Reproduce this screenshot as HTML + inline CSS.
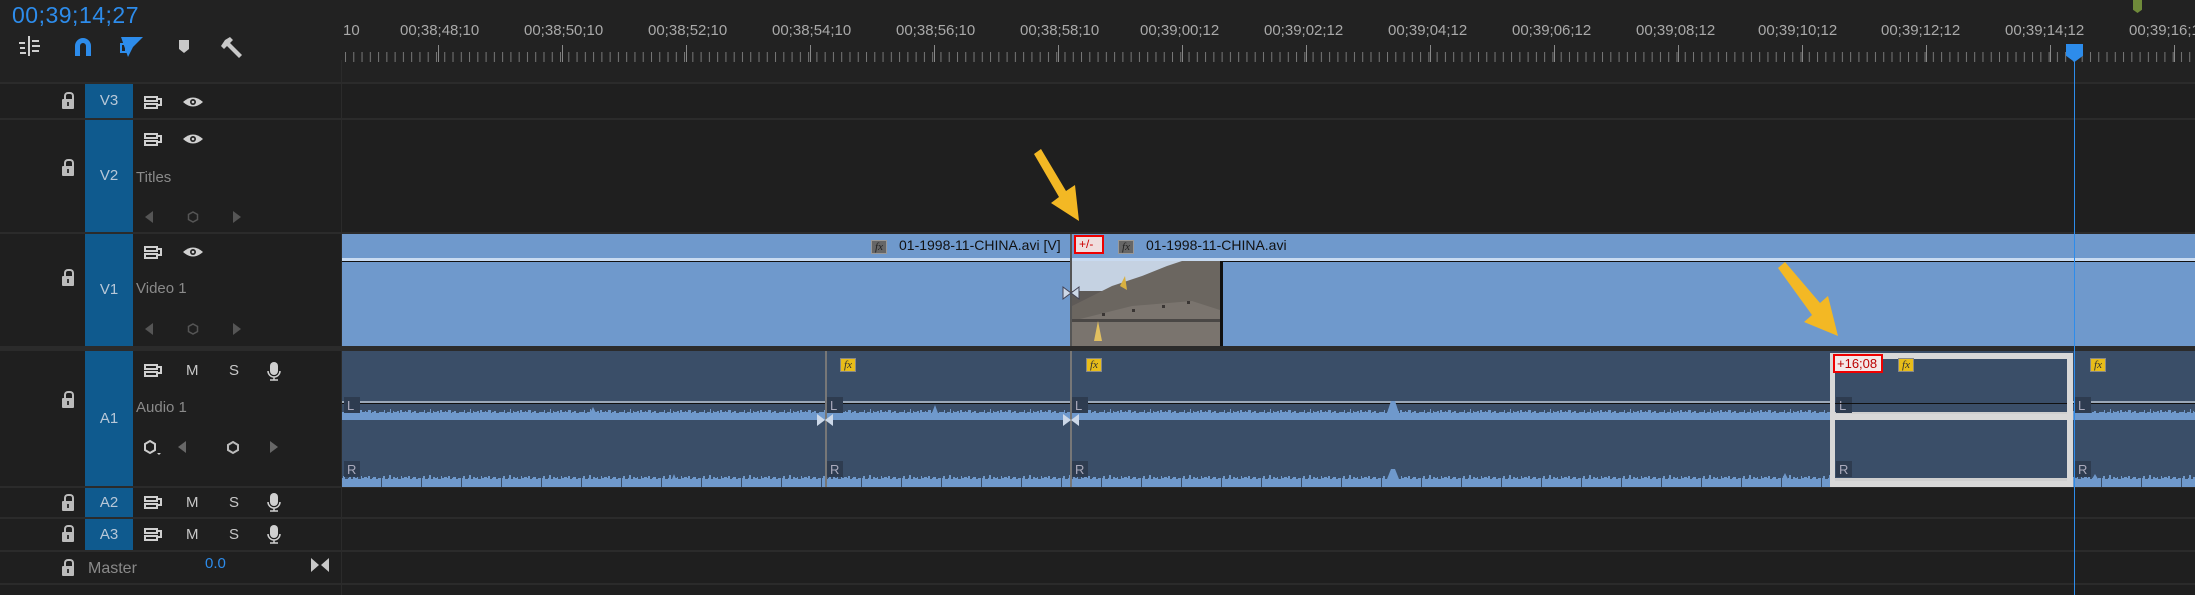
<!DOCTYPE html>
<html><head><meta charset="utf-8"><style>
*{margin:0;padding:0;box-sizing:border-box}
body{width:2195px;height:595px;background:#1f1f1f;position:relative;overflow:hidden;font-family:"Liberation Sans",sans-serif;color:#9a9a9a}
.a{position:absolute}
.row{position:absolute;left:0;width:2195px;border-bottom:2px solid #2b2b2b}
.lab{position:absolute;left:85px;width:48px;background:#0f5a8e;color:#b8c8d8;font-size:15px;text-align:center}
.lock{position:absolute;left:62px;width:12px;height:10px;background:#bbb;border-radius:1px}
.lock:before{content:"";position:absolute;left:2px;top:-7px;width:6px;height:7px;border:2px solid #bbb;border-bottom:none;border-radius:4px 4px 0 0}
.lock:after{content:"";position:absolute;left:5px;top:3px;width:2px;height:4px;background:#333}
.txt{position:absolute;font-size:15px;color:#8a8a8a}
.ic{position:absolute;font-size:15px;color:#c8c8c8}
.fx{position:absolute;width:16px;height:14px;background:#e8bd19;border:1px solid #888;font:italic 11px "Liberation Serif",serif;color:#333;text-align:center;line-height:12px}
.fxg{position:absolute;width:16px;height:14px;background:#666;border:1px solid #999;font:italic 11px "Liberation Serif",serif;color:#222;text-align:center;line-height:12px}
.rl{position:absolute;top:22px;font-size:15px;color:#a9a9a9;white-space:nowrap}
</style></head><body>
<!-- header -->
<div class="a" style="left:0;top:0;width:342px;height:82px;background:#222"></div>
<div class="a" style="left:12px;top:2px;font-size:23px;color:#2d8ceb;letter-spacing:0.5px">00;39;14;27</div>
<svg class="a" style="left:0;top:30px" width="342" height="36">
<g fill="#cfcfcf"><rect x="19" y="12" width="6" height="2"/><rect x="20" y="17" width="5" height="2"/><rect x="28" y="6" width="2" height="20"/><rect x="32" y="10" width="7" height="2"/><rect x="32" y="15" width="8" height="2"/><rect x="32" y="20" width="7" height="2"/><rect x="20" y="22" width="6" height="2"/></g>
<path d="M75 26 V16 a8 8 0 0 1 16 0 V26 h-5 V16 a3 3 0 0 0 -6 0 V26z" fill="#2d8ceb"/>
<path d="M121 7 h22 l-10 10 l-5 10 z" fill="#2d8ceb"/><rect x="121" y="14" width="5" height="8" fill="none" stroke="#2d8ceb" stroke-width="2"/>
<path d="M179 10 h10 v9 l-5 4 l-5 -4z" fill="#c8c8c8"/>
<path d="M225 10 l5 -3 l3 3 l-3 3 l12 12 l-3 3 l-12 -12 l-3 3 l-3 -3 z" fill="#c8c8c8"/>
</svg>
<!-- ruler -->
<div class="a" style="left:342px;top:0;width:1853px;height:82px;background:#222"></div>
<svg class="a" style="left:342px;top:40px" width="1853" height="26">
<defs><pattern id="tk" x="3" y="0" width="8.27" height="26" patternUnits="userSpaceOnUse"><rect x="0" y="12" width="1" height="10" fill="#777"/></pattern></defs>
<rect width="1853" height="26" fill="url(#tk)"/>
<g fill="#888"><rect x="96" y="5" width="1" height="17"/><rect x="220" y="5" width="1" height="17"/><rect x="344" y="5" width="1" height="17"/><rect x="468" y="5" width="1" height="17"/><rect x="592" y="5" width="1" height="17"/><rect x="716" y="5" width="1" height="17"/><rect x="840" y="5" width="1" height="17"/><rect x="964" y="5" width="1" height="17"/><rect x="1088" y="5" width="1" height="17"/><rect x="1212" y="5" width="1" height="17"/><rect x="1336" y="5" width="1" height="17"/><rect x="1460" y="5" width="1" height="17"/><rect x="1584" y="5" width="1" height="17"/><rect x="1708" y="5" width="1" height="17"/><rect x="1832" y="5" width="1" height="17"/></g>
</svg>
<div class="rl" style="left:343px">10</div>
<div class="rl" style="left:400px">00;38;48;10</div>
<div class="rl" style="left:524px">00;38;50;10</div>
<div class="rl" style="left:648px">00;38;52;10</div>
<div class="rl" style="left:772px">00;38;54;10</div>
<div class="rl" style="left:896px">00;38;56;10</div>
<div class="rl" style="left:1020px">00;38;58;10</div>
<div class="rl" style="left:1140px">00;39;00;12</div>
<div class="rl" style="left:1264px">00;39;02;12</div>
<div class="rl" style="left:1388px">00;39;04;12</div>
<div class="rl" style="left:1512px">00;39;06;12</div>
<div class="rl" style="left:1636px">00;39;08;12</div>
<div class="rl" style="left:1758px">00;39;10;12</div>
<div class="rl" style="left:1881px">00;39;12;12</div>
<div class="rl" style="left:2005px">00;39;14;12</div>
<div class="rl" style="left:2129px">00;39;16;12</div>
<div class="a" style="left:2133px;top:0;width:9px;height:13px;background:#6f8a3a;clip-path:polygon(0 0,100% 0,100% 75%,50% 100%,0 75%)"></div>
<div class="a" style="left:0;top:82px;width:2195px;height:2px;background:#2b2b2b"></div>
<div class="a" style="left:341px;top:60px;width:1px;height:535px;background:#2b2b2b"></div>

<!-- tracks left -->
<div class="row" style="top:84px;height:36px"></div>
<div class="lab" style="top:84px;height:34px;line-height:34px">V3</div><div class="lock" style="top:99px"></div>
<div class="row" style="top:120px;height:114px"></div>
<div class="lab" style="top:120px;height:112px;line-height:112px">V2</div><div class="lock" style="top:166px"></div>
<div class="row" style="top:234px;height:112px;border:none"></div>
<div class="lab" style="top:234px;height:112px;line-height:112px">V1</div><div class="lock" style="top:276px"></div>
<div class="a" style="left:0;top:346px;width:2195px;height:5px;background:#2b2b2b"></div>
<div class="row" style="top:351px;height:137px"></div>
<div class="lab" style="top:351px;height:135px;line-height:135px">A1</div><div class="lock" style="top:398px"></div>
<div class="row" style="top:488px;height:31px"></div>
<div class="lab" style="top:488px;height:29px;line-height:29px">A2</div><div class="lock" style="top:501px"></div>
<div class="row" style="top:519px;height:33px"></div>
<div class="lab" style="top:519px;height:31px;line-height:31px">A3</div><div class="lock" style="top:532px"></div>
<div class="row" style="top:552px;height:33px"></div>
<div class="lock" style="top:566px"></div>
<div class="txt" style="left:88px;top:560px;font-size:16px">Master</div>
<div class="txt" style="left:205px;top:555px;color:#2d8ceb">0.0</div>
<svg class="a" style="left:311px;top:558px" width="18" height="14"><path d="M0 0 L8 7 L0 14z M18 0 L10 7 L18 14z" fill="#c8c8c8"/></svg>

<!-- track header icons -->
<svg class="a" style="left:0;top:0" width="342" height="595">
<defs>
<g id="tg" fill="none" stroke="#d0d0d0" stroke-width="2"><rect x="-8" y="-5" width="12" height="4"/><rect x="-8" y="2" width="12" height="4"/><path d="M4 -3 h4 v6 h-4"/></g>
<g id="eye"><path d="M-10 0 Q0 -9 10 0 Q0 9 -10 0z" fill="#d0d0d0"/><circle r="3" fill="#222"/><circle r="1.3" fill="#d0d0d0"/></g>
<g id="mic"><rect x="-4" y="-9" width="8" height="13" rx="4" fill="#d0d0d0"/><path d="M-6 0 a6 6 0 0 0 12 0 M0 6 v3 M-4 9 h8" fill="none" stroke="#d0d0d0" stroke-width="1.5"/></g>
<g id="nav" fill="#555"><path d="M-40 -6 v12 l-8 -6z"/><path d="M40 -6 v12 l8 -6z"/><path d="M0 -5 l4.5 2.5 v5 l-4.5 2.5 l-4.5 -2.5 v-5z" fill="none" stroke="#555" stroke-width="1.5"/></g>
</defs>
<use href="#tg" x="153" y="102"/><use href="#eye" x="193" y="102"/>
<use href="#tg" x="153" y="139"/><use href="#eye" x="193" y="139"/>
<use href="#nav" x="193" y="217"/>
<use href="#tg" x="153" y="252"/><use href="#eye" x="193" y="252"/>
<use href="#nav" x="193" y="329"/>
<use href="#tg" x="153" y="370"/><use href="#mic" x="274" y="371"/>
<use href="#tg" x="153" y="502"/><use href="#mic" x="274" y="502"/>
<use href="#tg" x="153" y="534"/><use href="#mic" x="274" y="534"/>
<g fill="#676767"><path d="M186 441 v12 l-8 -6z"/><path d="M270 441 v12 l8 -6z"/></g>
<path d="M233 442 l5 3 v5 l-5 3 l-5 -3 v-5z" fill="none" stroke="#bbb" stroke-width="2"/>
<path d="M150 441 l5 3 v6 l-5 3 l-5 -3 v-6z" fill="none" stroke="#ccc" stroke-width="2"/><path d="M157 453 h4 l-2 2z" fill="#ccc"/>
</svg>
<div class="ic" style="left:186px;top:362px">M</div><div class="ic" style="left:229px;top:362px">S</div>
<div class="ic" style="left:186px;top:494px">M</div><div class="ic" style="left:229px;top:494px">S</div>
<div class="ic" style="left:186px;top:526px">M</div><div class="ic" style="left:229px;top:526px">S</div>
<div class="txt" style="left:136px;top:169px">Titles</div>
<div class="txt" style="left:136px;top:280px">Video 1</div>
<div class="txt" style="left:136px;top:399px">Audio 1</div>

<!-- V1 clip -->
<div class="a" style="left:342px;top:234px;width:1853px;height:112px;background:#6f99cc"></div>
<div class="a" style="left:342px;top:258px;width:1853px;height:3px;background:#c8daf0"></div>
<div class="a" style="left:342px;top:261px;width:1853px;height:1px;background:#111"></div>
<div class="a" style="left:1070px;top:234px;width:2px;height:112px;background:#555"></div>
<div class="fxg" style="left:871px;top:240px">fx</div>
<div class="a" style="left:899px;top:237px;font-size:14px;color:#111">01-1998-11-CHINA.avi [V]</div>
<div class="a" style="left:1074px;top:235px;width:30px;height:19px;background:#f0dede;border:2px solid #e00;font-size:12px;color:#c00;padding-left:3px;line-height:15px">+/-</div>
<div class="fxg" style="left:1118px;top:240px">fx</div>
<div class="a" style="left:1146px;top:237px;font-size:14px;color:#111">01-1998-11-CHINA.avi</div>
<svg class="a" style="left:1072px;top:261px" width="151" height="85">
<rect width="151" height="85" fill="#5e5a57"/>
<rect width="151" height="30" fill="#c5d2e2"/>
<path d="M0 45 L40 25 L70 15 L95 5 L110 0 L151 0 L151 85 L0 85z" fill="#6b6660"/>
<path d="M0 60 L60 45 L120 40 L151 50 L151 85 L0 85z" fill="#7a746e"/>
<rect x="0" y="58" width="151" height="3" fill="#4a4745"/>
<g fill="#3a3634"><rect x="60" y="48" width="3" height="3"/><rect x="90" y="44" width="3" height="3"/><rect x="115" y="40" width="3" height="3"/><rect x="30" y="52" width="3" height="3"/></g>
<path d="M48 25 l5 -10 l2 14z" fill="#d8b040"/><path d="M22 80 l4 -20 l4 20z" fill="#e2c060"/>
<rect x="148" y="0" width="3" height="85" fill="#111"/>
</svg>
<svg class="a" style="left:1062px;top:286px" width="18" height="14"><path d="M1 1 L9 7 L1 13z M17 1 L9 7 L17 13z" fill="#ccd8e8" stroke="#445" stroke-width="1"/></svg>

<!-- A1 clip -->
<div class="a" style="left:342px;top:351px;width:1853px;height:136px;background:#3a4e68"></div>
<svg class="a" style="left:342px;top:351px" width="1853" height="136">
<defs>
<pattern id="wl" x="0" y="0" width="40" height="136" patternUnits="userSpaceOnUse">
<path d="M0 61 h2 v-2 h1 v3 h2 v-1 h3 v-3 h1 v4 h2 v-2 h1 v1 h3 v-1 h2 v2 h1 v-3 h2 v2 h3 v-1 h1 v1 h2 v-2 h3 v3 h1 v-1 h2 v-1 h2 v2 h3 v-1 h3 V69 H0z" fill="#6f99cc"/>
</pattern>
<pattern id="wr" x="0" y="0" width="40" height="136" patternUnits="userSpaceOnUse">
<path d="M0 127 h1 v-2 h2 v3 h3 v-1 h1 v-3 h2 v4 h2 v-2 h2 v1 h2 v-1 h1 v2 h3 v-3 h1 v2 h2 v-1 h3 v1 h1 v-2 h2 v3 h2 v-1 h1 v-1 h3 v2 h2 v-1 h3 V136 H0z" fill="#6f99cc"/>
</pattern>
</defs>
<rect width="1853" height="136" fill="url(#wl)"/>
<rect width="1853" height="136" fill="url(#wr)"/>
<rect x="0" y="50" width="1853" height="2" fill="#9aa8b8"/>
<rect x="0" y="52" width="1853" height="1" fill="#111"/>
<g fill="#6f99cc"><path d="M1045 62 l4 -12 l4 0 l4 12z"/><path d="M1045 128 l4 -10 l4 0 l4 10z"/><path d="M590 62 l3 -8 l3 8z"/><path d="M248 62 l3 -6 l3 6z"/><path d="M1560 62 l2 -7 l2 7z"/><path d="M1440 128 l3 -6 l3 6z"/><path d="M330 128 l2 -5 l2 5z"/><path d="M1750 128 l3 -5 l3 5z"/></g>
<g fill="#2e3c50"><rect x="2" y="46" width="16" height="16"/><rect x="2" y="110" width="16" height="16"/><rect x="485" y="46" width="16" height="16"/><rect x="485" y="110" width="16" height="16"/><rect x="730" y="46" width="16" height="16"/><rect x="730" y="110" width="16" height="16"/><rect x="1733" y="46" width="16" height="16"/><rect x="1733" y="110" width="16" height="16"/></g>
<g fill="#aab" font-size="13" font-family="Liberation Sans"><text x="5" y="59">L</text><text x="5" y="123">R</text><text x="488" y="59">L</text><text x="488" y="123">R</text><text x="733" y="59">L</text><text x="733" y="123">R</text><text x="1736" y="59">L</text><text x="1736" y="123">R</text></g>
<rect x="483" y="0" width="2" height="136" fill="#777"/>
<rect x="728" y="0" width="2" height="136" fill="#777"/>
<!-- selected clip overlay -->
<rect x="1493" y="0" width="237" height="136" fill="#3a4e68"/>
<rect x="1493" y="61" width="237" height="8" fill="#cfcfcf"/>
<rect x="1493" y="127" width="237" height="9" fill="#cfcfcf"/>
<g fill="#2e3c50"><rect x="1494" y="46" width="16" height="16"/><rect x="1494" y="110" width="16" height="16"/></g>
<g fill="#aab" font-size="13" font-family="Liberation Sans"><text x="1497" y="59">L</text><text x="1497" y="123">R</text></g>
</svg>
<svg class="a" style="left:816px;top:413px" width="18" height="14"><path d="M1 1 L9 7 L1 13z M17 1 L9 7 L17 13z" fill="#ccd8e8"/></svg>
<svg class="a" style="left:1062px;top:413px" width="18" height="14"><path d="M1 1 L9 7 L1 13z M17 1 L9 7 L17 13z" fill="#ccd8e8"/></svg>
<!-- selected clip -->
<div class="a" style="left:1830px;top:353px;width:243px;height:134px;border:6px solid #d8d8d8;border-left-width:5px"></div>
<div class="a" style="left:1835px;top:414px;width:232px;height:6px;background:#d8d8d8"></div>
<div class="a" style="left:1835px;top:403px;width:232px;height:1px;background:#111"></div>
<div class="a" style="left:1833px;top:354px;width:50px;height:19px;background:#f4e8e8;border:2px solid #e00;font-size:13px;color:#b00;line-height:15px;padding-left:2px">+16;08</div>
<div class="fx" style="left:840px;top:358px">fx</div>
<div class="fx" style="left:1086px;top:358px">fx</div>
<div class="fx" style="left:1898px;top:358px">fx</div>
<div class="fx" style="left:2090px;top:358px">fx</div>

<!-- playhead -->
<div class="a" style="left:2074px;top:58px;width:1px;height:537px;background:#2d8ceb"></div>
<div class="a" style="left:2066px;top:44px;width:17px;height:18px;background:#2d8ceb;clip-path:polygon(0 0,100% 0,100% 65%,50% 100%,0 65%)"></div>

<!-- arrows -->
<svg class="a" style="left:0;top:0" width="2195" height="595">
<g fill="#f3b824">
<path d="M1034 154 L1041 149 L1066 191 L1075 185 L1079 221 L1051 203 L1059 197z"/>
<path d="M1778 268 L1785 262 L1820 303 L1828 296 L1838 336 L1804 322 L1812 315z"/>
</g>
</svg>
</body></html>
